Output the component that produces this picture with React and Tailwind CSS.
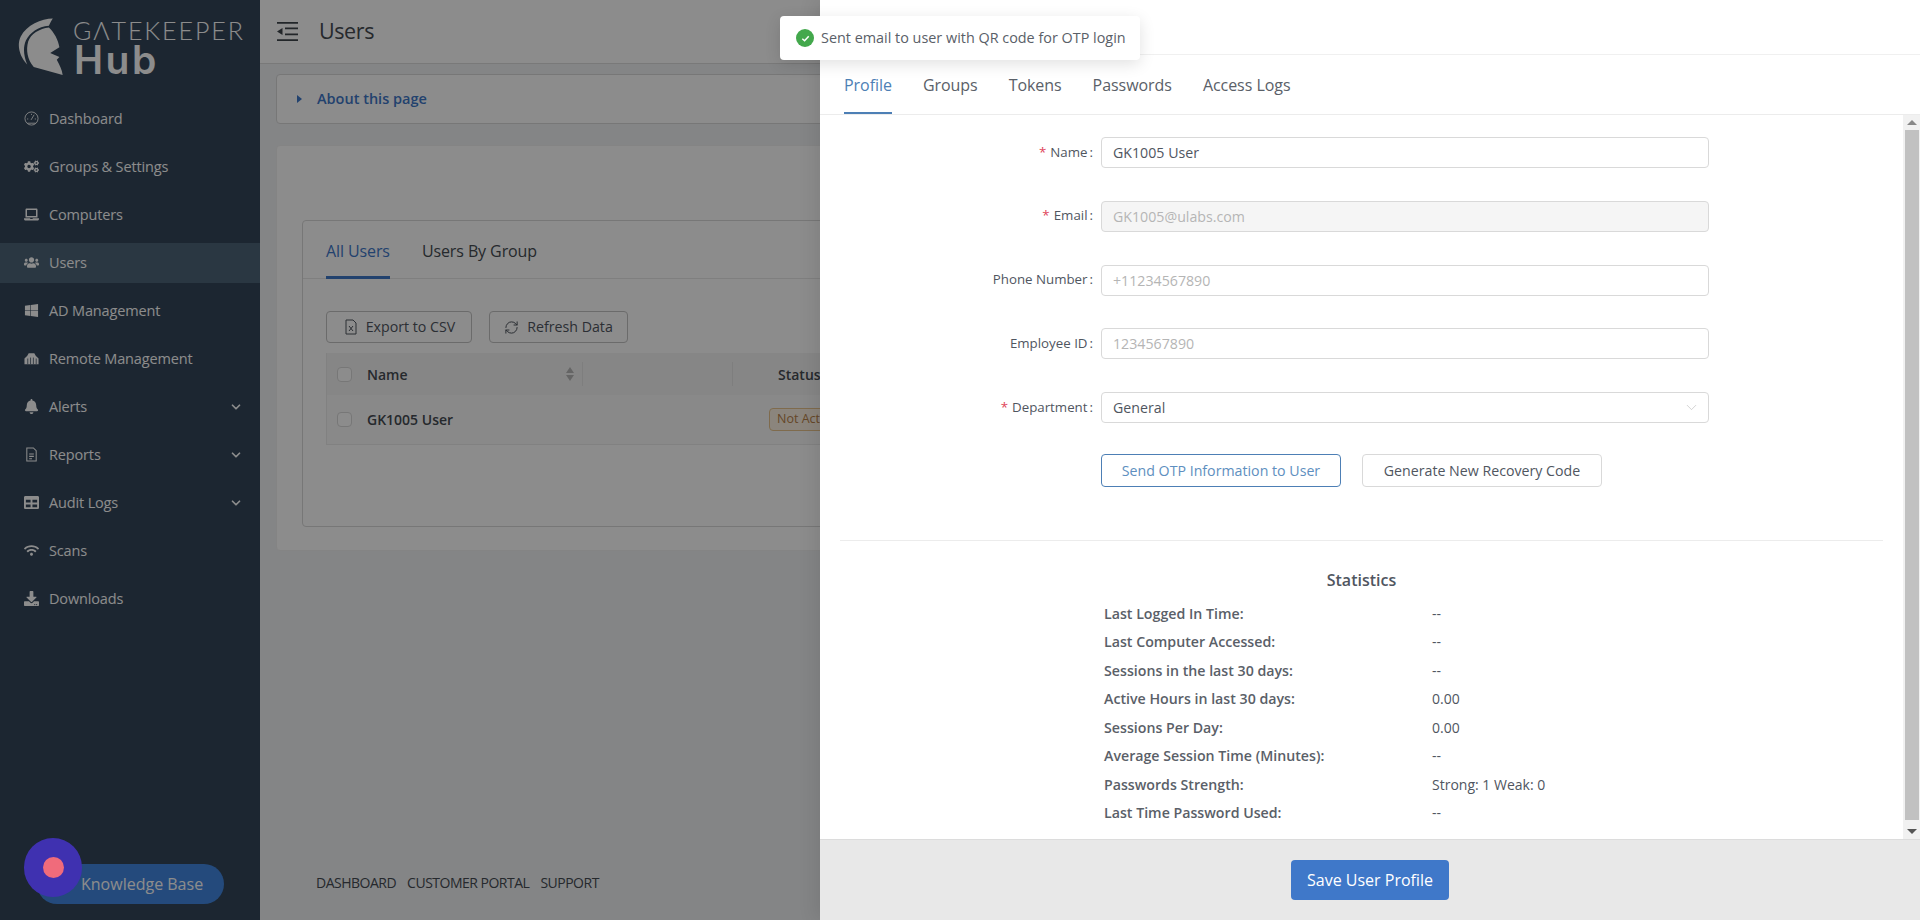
import { ChevronDown, RefreshCw } from "lucide-react";
import { FaUsers, FaBell, FaWifi, FaLaptop, FaCogs, FaWindows, FaDownload, FaTable } from "react-icons/fa";

const NAV = [
  { label: "Dashboard", icon: "gauge" },
  { label: "Groups & Settings", icon: "cogs" },
  { label: "Computers", icon: "laptop" },
  { label: "Users", icon: "users", active: true },
  { label: "AD Management", icon: "windows" },
  { label: "Remote Management", icon: "remote" },
  { label: "Alerts", icon: "bell", sub: true },
  { label: "Reports", icon: "file", sub: true },
  { label: "Audit Logs", icon: "table", sub: true },
  { label: "Scans", icon: "wifi" },
  { label: "Downloads", icon: "download" },
];

const STATS = [
  ["Last Logged In Time:", "--"],
  ["Last Computer Accessed:", "--"],
  ["Sessions in the last 30 days:", "--"],
  ["Active Hours in last 30 days:", "0.00"],
  ["Sessions Per Day:", "0.00"],
  ["Average Session Time (Minutes):", "--"],
  ["Passwords Strength:", "Strong: 1 Weak: 0"],
  ["Last Time Password Used:", "--"],
];

function NavIcon({ name }) {
  const cls = "h-[15px] w-[15px]";
  if (name === "gauge") {
    return (
      <svg viewBox="0 0 16 16" fill="none" stroke="currentColor" strokeWidth="0.9" className={cls}>
        <circle cx="8" cy="8" r="7" />
        <path d="M7.500 9.500 10.800 4M3.300 8.500h1.200M11.500 8.500h1.200M8 3v1.200M3.500 13h9" />
      </svg>
    );
  }
  if (name === "cogs") return <FaCogs className={cls} />;
  if (name === "laptop") return <FaLaptop className={cls} />;
  if (name === "users") return <FaUsers className={cls} />;
  if (name === "windows") return <FaWindows className={cls} />;
  if (name === "remote") {
    return (
      <svg viewBox="0 0 16 16" fill="currentColor" className={cls}>
        <path d="M3.500 5 5 2.500h6L12.500 5 15.500 8v6H.5V8L3.500 5Z" />
        <path d="M4 8v6M7 7v7M10 7v7M13 8v6" stroke="#33465a" strokeWidth="0.8" />
      </svg>
    );
  }
  if (name === "bell") return <FaBell className={cls} />;
  if (name === "file") {
    return (
      <svg viewBox="0 0 16 16" fill="none" stroke="currentColor" strokeWidth="1.1" className={cls}>
        <path d="M3 1h7l3 3v11H3V1Z" />
        <path d="M5.500 7.500h5M5.500 10h5M5.500 12.500h3" />
      </svg>
    );
  }
  if (name === "table") return <FaTable className={cls} />;
  if (name === "wifi") return <FaWifi className={cls} />;
  return <FaDownload className={cls} />;
}

function Helmet() {
  return (
    <svg viewBox="24 24 140 175" className="h-[58px] w-[46px] shrink-0" fill="#fff">
      <path d="M130 25C95 25 50 45 32 80 20 105 28 140 52 165 42 140 38 115 48 92 60 68 85 50 118 47 122 38 126 31 130 25Z" />
      <path d="M118 52C90 55 62 72 55 95 48 120 52 150 72 172L160 197C158 180 150 165 142 150L150 142 122 130 150 112C146 90 135 68 118 52Z" />
    </svg>
  );
}

function Sidebar() {
  return (
    <aside className="flex h-full w-[260px] shrink-0 flex-col bg-[#33465a] text-white">
      <div className="flex h-[98.500px] items-start gap-[9px] pl-[18px] pt-[18px]">
        <Helmet />
        <div className="-mt-[1px] flex flex-col">
          <span className="font-['Lato',sans-serif] text-[25px] font-light leading-[26px] tracking-[1.9px]">GΛTEKEEPER</span>
          <span className="mt-[2px] pl-[1px] font-['Inter',sans-serif] text-[39px] font-semibold leading-[30px] tracking-[2.5px]">Hub</span>
        </div>
      </div>
      <nav className="flex flex-col gap-[8px]">
        {NAV.map((item) => (
          <a
            key={item.label}
            href="#"
            className={"flex h-[40px] items-center pl-[24px] pr-[17px] text-[14.500px] " + (item.active ? "bg-[#4d6479]" : "")}
          >
            <NavIcon name={item.icon} />
            <span className="ml-[10px] flex-1 tracking-[-0.15px]">{item.label}</span>
            {item.sub && <ChevronDown className="h-[14px] w-[14px]" strokeWidth={3} />}
          </a>
        ))}
      </nav>
      <div className="mt-auto pb-[16px] pl-[37px]">
        <a href="#" className="flex h-[40px] w-[187px] items-center rounded-full bg-[#4287e2] pl-[44px] text-[16px]">
          Knowledge Base
        </a>
      </div>
    </aside>
  );
}

function UsersCard() {
  return (
    <div className="h-full overflow-hidden rounded border border-[#f0f0f0] bg-white">
      <div className="h-[74px]" />
      <div className="mx-[25px] h-[307px] rounded border border-[#d9d9d9]">
        <div className="flex h-[58px] border-b border-[#e8e8e8] pl-[23px] text-[16px] tracking-[-0.1px] text-[#454b52]">
          <a className="h-[58px] border-b-[3px] border-[#3f78c9] pt-[18px] text-[#3f78c9]">All Users</a>
          <a className="ml-[32px] pt-[18px]">Users By Group</a>
        </div>
        <div className="mx-[23px] mt-[32px] flex h-[32px] gap-[17px] text-[14.200px]">
          <button className="flex w-[146px] items-center justify-center gap-[7px] rounded border border-[#c4c4c4] text-[#50565f]">
            <svg viewBox="0 0 16 16" fill="none" stroke="currentColor" strokeWidth="1" className="h-[16px] w-[16px]">
              <path d="M3 1h7l3 3v11H3V1Z" />
              <path d="M6 7l4 5M10 7l-4 5" />
            </svg>
            Export to CSV
          </button>
          <button className="flex w-[139px] items-center justify-center gap-[8px] rounded border border-[#c4c4c4] text-[#50565f]">
            <RefreshCw className="h-[15px] w-[15px]" strokeWidth={1.6} />
            Refresh Data
          </button>
        </div>
        <div className="ml-[23px] mt-[10px] w-[900px] border-b border-l border-[#ececec] text-[14px] text-[#454b52]">
          <div className="flex h-[42px] items-center bg-[#f5f5f5] font-semibold">
            <span className="ml-[10px] h-[15px] w-[15px] rounded-sm border border-[#d9d9d9] bg-white" />
            <span className="ml-[15px] w-[199px]">Name</span>
            <span className="flex h-[24px] items-center border-r border-[#e6e6e6] pr-[8px]">
              <svg viewBox="0 0 8 14" fill="#b8b8b8" className="h-[14px] w-[8px]">
                <path d="M4 0 8 6H0L4 0ZM0 8h8l-4 6-4-6Z" />
              </svg>
            </span>
            <span className="h-[24px] w-[150px] border-r border-[#e6e6e6]" />
            <span className="ml-[45px]">Status</span>
          </div>
          <div className="flex h-[49px] items-center bg-[#fafafa]">
            <span className="ml-[10px] h-[15px] w-[15px] rounded-sm border border-[#d9d9d9] bg-white" />
            <span className="ml-[15px] w-[402px] font-semibold">GK1005 User</span>
            <span className="rounded-sm border border-[#e8c48c] bg-[#fdf3e3] px-[7px] py-[1px] text-[12.500px] text-[#b9814a]">Not Active</span>
          </div>
        </div>
      </div>
    </div>
  );
}

function Main() {
  return (
    <main className="flex h-full flex-1 flex-col bg-[#f0f2f5]">
      <header className="flex h-[64px] shrink-0 items-center border-b border-[#dcdcdc] bg-white pl-[17px]">
        <svg viewBox="0 0 21 19" fill="#3f454c" className="h-[19px] w-[21px]">
          <path d="M0 0h21v1.800H0zM8 5.500h13v1.800H8zM8 11.500h13v1.800H8zM0 17.200h21V19H0zM5.500 6v7L0 9.500z" />
        </svg>
        <h1 className="ml-[21px] text-[21.500px] tracking-[-0.4px] text-[#454b52]">Users</h1>
      </header>
      <div className="flex flex-1 flex-col px-[16px] pt-[10px]">
        <div className="flex h-[50px] items-center rounded border border-[#d9d9d9] bg-white pl-[20px] text-[14.500px] font-semibold text-[#3f78c9]">
          <span className="h-0 w-0 border-y-[4px] border-l-[5px] border-y-transparent border-l-[#3f78c9]" />
          <span className="ml-[15px]">About this page</span>
        </div>
        <div className="mt-[21px] h-[406px] shrink-0">
          <UsersCard />
        </div>
        <div className="mt-auto flex gap-[11px] pb-[27px] pl-[40px] text-[14px] tracking-[-0.5px] text-[#454b52]">
          <a>DASHBOARD</a>
          <a>CUSTOMER PORTAL</a>
          <a>SUPPORT</a>
        </div>
      </div>
    </main>
  );
}

function Field({ label, required, children }) {
  return (
    <div className="flex h-[31px] items-center">
      <label className="w-[281px] pr-[8px] text-right text-[13.300px] text-[#50565f]">
        {required && <span className="mr-[4px] text-[#e0455a]">*</span>}
        {label}
        <span className="ml-[2px]">:</span>
      </label>
      {children}
    </div>
  );
}

const INPUT = "h-[31px] w-[608px] rounded border border-[#d9d9d9] px-[11px] text-[14.200px] outline-none placeholder:text-[#b5b5b5]";

function Drawer() {
  return (
    <div className="absolute bottom-0 right-0 top-0 z-20 flex w-[1100px] flex-col bg-white shadow-[-6px_0_16px_rgba(0,0,0,0.08)]">
      <div className="h-[55px] shrink-0 border-b border-[#f0f0f0]" />
      <div className="flex h-[60px] shrink-0 gap-[31px] border-b border-[#ececec] pl-[24px] text-[16px] tracking-[-0.05px] text-[#5a6068]">
        <a className="h-[59px] border-b-[2px] border-[#4d7fb5] pt-[18px] text-[#4d7fb5]">Profile</a>
        <a className="pt-[18px]">Groups</a>
        <a className="pt-[18px]">Tokens</a>
        <a className="pt-[18px]">Passwords</a>
        <a className="pt-[18px]">Access Logs</a>
      </div>
      <div className="flex min-h-0 flex-1">
        <div className="w-[1083px] shrink-0 overflow-hidden pt-[22px]">
          <div className="flex flex-col gap-[32.800px]">
            <Field label="Name" required>
              <input className={INPUT + " text-[#50565f]"} defaultValue="GK1005 User" readOnly />
            </Field>
            <Field label="Email" required>
              <input className={INPUT + " bg-[#f5f5f5] text-[#b5b5b5]"} defaultValue="GK1005@ulabs.com" readOnly />
            </Field>
            <Field label="Phone Number">
              <input className={INPUT} placeholder="+11234567890" readOnly />
            </Field>
            <Field label="Employee ID">
              <input className={INPUT} placeholder="1234567890" readOnly />
            </Field>
            <Field label="Department" required>
              <div className={INPUT + " flex items-center justify-between text-[#50565f]"}>
                General
                <ChevronDown className="-mr-[3px] h-[17px] w-[17px] text-[#c0c0c0]" strokeWidth={1} />
              </div>
            </Field>
          </div>
          <div className="ml-[281px] mt-[31px] flex h-[33px] gap-[21px] text-[14.200px]">
            <button className="w-[240px] rounded border border-[#4d7fb5] text-[#5e8fc0]">Send OTP Information to User</button>
            <button className="w-[240px] rounded border border-[#d9d9d9] text-[#50565f]">Generate New Recovery Code</button>
          </div>
          <div className="ml-[20px] mt-[53px] h-px w-[1043px] bg-[#ececec]" />
          <h3 className="mt-[25px] h-[28px] text-center text-[16px] font-semibold leading-[28px] text-[#50565f]">Statistics</h3>
          <div className="mt-[5px] pl-[284px] text-[14px] text-[#50565f]">
            {STATS.map(([label, value]) => (
              <div key={label} className="flex h-[28.500px] items-center">
                <span className="w-[328px] text-[14.200px] font-semibold text-[#5a6068]">{label}</span>
                <span>{value}</span>
              </div>
            ))}
          </div>
        </div>
        <div className="flex w-[17px] flex-col items-center justify-between bg-[#f1f1f1] py-[5px]">
          <span className="h-0 w-0 border-x-[5px] border-b-[5px] border-x-transparent border-b-[#888]" />
          <span className="absolute bottom-[100px] top-[130px] w-[14px] bg-[#c1c1c1]" />
          <span className="h-0 w-0 border-x-[5px] border-t-[5px] border-x-transparent border-t-[#555]" />
        </div>
      </div>
      <div className="flex h-[81px] shrink-0 items-start justify-center border-t border-[#dcdcdc] bg-[#e8e8e8] pt-[20px]">
        <button className="h-[40px] w-[158px] rounded bg-[#3f78c9] text-[16px] text-white">Save User Profile</button>
      </div>
    </div>
  );
}

export default function App() {
  return (
    <div className="relative flex h-[920px] w-[1920px] overflow-hidden font-['Open_Sans',sans-serif]">
      <Sidebar />
      <Main />
      {/* drawer mask */}
      <div className="absolute inset-0 z-10 bg-black/45" />
      <Drawer />
      <div className="absolute left-[780px] top-[16px] z-30 flex h-[44px] w-[360px] items-center rounded bg-white pl-[16px] text-[14.400px] text-[#5a6068] shadow-[0_4px_16px_rgba(0,0,0,0.12)]">
        <span className="flex h-[18px] w-[18px] items-center justify-center rounded-full bg-[#43a84c]">
          <svg viewBox="0 0 12 12" fill="none" stroke="#fff" strokeWidth="1.6" className="h-[11px] w-[11px]">
            <path d="M2.500 6.300 5 8.500 9.500 3.500" />
          </svg>
        </span>
        <span className="ml-[7px]">Sent email to user with QR code for OTP login</span>
      </div>
      <div className="absolute bottom-[23px] left-[24px] z-30 flex h-[59px] w-[58px] items-center justify-center rounded-full bg-[#3f31b0]">
        <span className="h-[21px] w-[21px] rounded-full bg-[#f06b7b]" />
      </div>
    </div>
  );
}
